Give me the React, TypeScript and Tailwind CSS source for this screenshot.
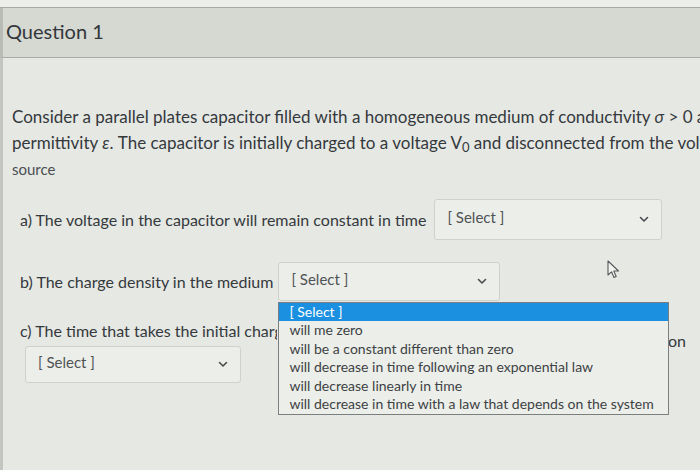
import React from "react";

const options = [
    "will me zero",
    "will be a constant different than zero",
    "will decrease in time following an exponential law",
    "will decrease linearly in time",
    "will decrease in time with a law that depends on the system",
];

const Chevron = () => (
    <svg width="10" height="7" viewBox="0 0 10 7" className="shrink-0">
        <path d="M1.5 1.5 L5 5 L8.5 1.5" fill="none" stroke="#4a4d50" strokeWidth="1.6" strokeLinecap="round" strokeLinejoin="round" />
    </svg>
);

const SelectBox = ({ width, height }: { width: string; height: string }) => (
    <div
        className={`${width} ${height} flex items-center justify-between pl-[12px] pr-3 bg-[#eceee9] border border-[#cfd1cc] rounded-[3px] text-[15px] text-[#4f5356]`}
    >
        <span className="-mt-[4px]">[ Select ]</span>
        <Chevron />
    </div>
);

const Cursor = () => (
    <svg width="16" height="20" viewBox="0 0 16 20" className="absolute left-[606px] top-[260px]">
        <path
            d="M2 1 L2 15 L5.5 11.8 L8 17.5 L10.2 16.5 L7.8 11 L12.5 11 Z"
            fill="#f3f4f1"
            stroke="#55585a"
            strokeWidth="1.1"
            strokeLinejoin="round"
        />
    </svg>
);

export default function App() {
    return (
        <div className="relative w-[700px] h-[470px] overflow-hidden bg-[#e6e8e3] font-['Lato',sans-serif] text-[#34393d]">
            <div className="h-[8px] bg-[#eceeea] border-b border-[#a7a9a5]" />
            <div className="h-[50px] bg-[#d6d8d2] border-b border-[#a9aba7] border-l-[3px] border-l-[#b9bbb7] flex items-center pl-[3px]">
                <h1 className="text-[20px] text-[#32373b] -mt-[3px]">Question 1</h1>
            </div>

            <div className="border-l-[3px] border-[#c3c5c0] h-full">
                <div className="pl-[9px] pt-[46px] text-[17px] leading-[26px] whitespace-nowrap">
                    <p>
                        Consider a parallel plates capacitor filled with a homogeneous medium of conductivity{" "}
                        <span className="italic">σ</span> &gt; 0 and
                    </p>
                    <p>
                        permittivity <span className="italic">ε</span>. The capacitor is initially charged to a voltage V
                        <sub className="text-[13px]">0</sub> and disconnected from the voltage
                    </p>
                    <p className="text-[15px] text-[#4a4f52]">source</p>
                </div>

                <div className="pl-[17px] mt-[17px] flex items-center gap-[8px] text-[16px]">
                    <span>a) The voltage in the capacitor will remain constant in time</span>
                    <SelectBox width="w-[228px]" height="h-[41px]" />
                </div>

                <div className="pl-[17px] mt-[22px] flex items-center gap-[5px] text-[16px]">
                    <span>b) The charge density in the medium</span>
                    <div className="relative z-10">
                        <SelectBox width="w-[222px]" height="h-[39px]" />
                        <div className="absolute left-0 top-[40px] w-[391px] bg-[#eceee9] border border-[#7c7f80] text-[14px] leading-[18.5px] text-[#3d4245]">
                            <div className="bg-[#1b8fe0] text-white pl-[10px] leading-[18px]">[ Select ]</div>
                            {options.map((o) => (
                                <div key={o} className="pl-[10px] whitespace-nowrap">
                                    {o}
                                </div>
                            ))}
                        </div>
                    </div>
                </div>

                <div className="pl-[17px] pr-[14px] mt-[20px] h-[20px] leading-[20px] flex justify-between text-[16px] whitespace-nowrap">
                    <span className="w-[257px] overflow-hidden">c) The time that takes the initial charge to decrease</span>
                    <span className="mt-[10px]">on</span>
                </div>
                <div className="pl-[22px] mt-[5px]">
                    <SelectBox width="w-[216px]" height="h-[37px]" />
                </div>
            </div>

            <Cursor />
        </div>
    );
}
